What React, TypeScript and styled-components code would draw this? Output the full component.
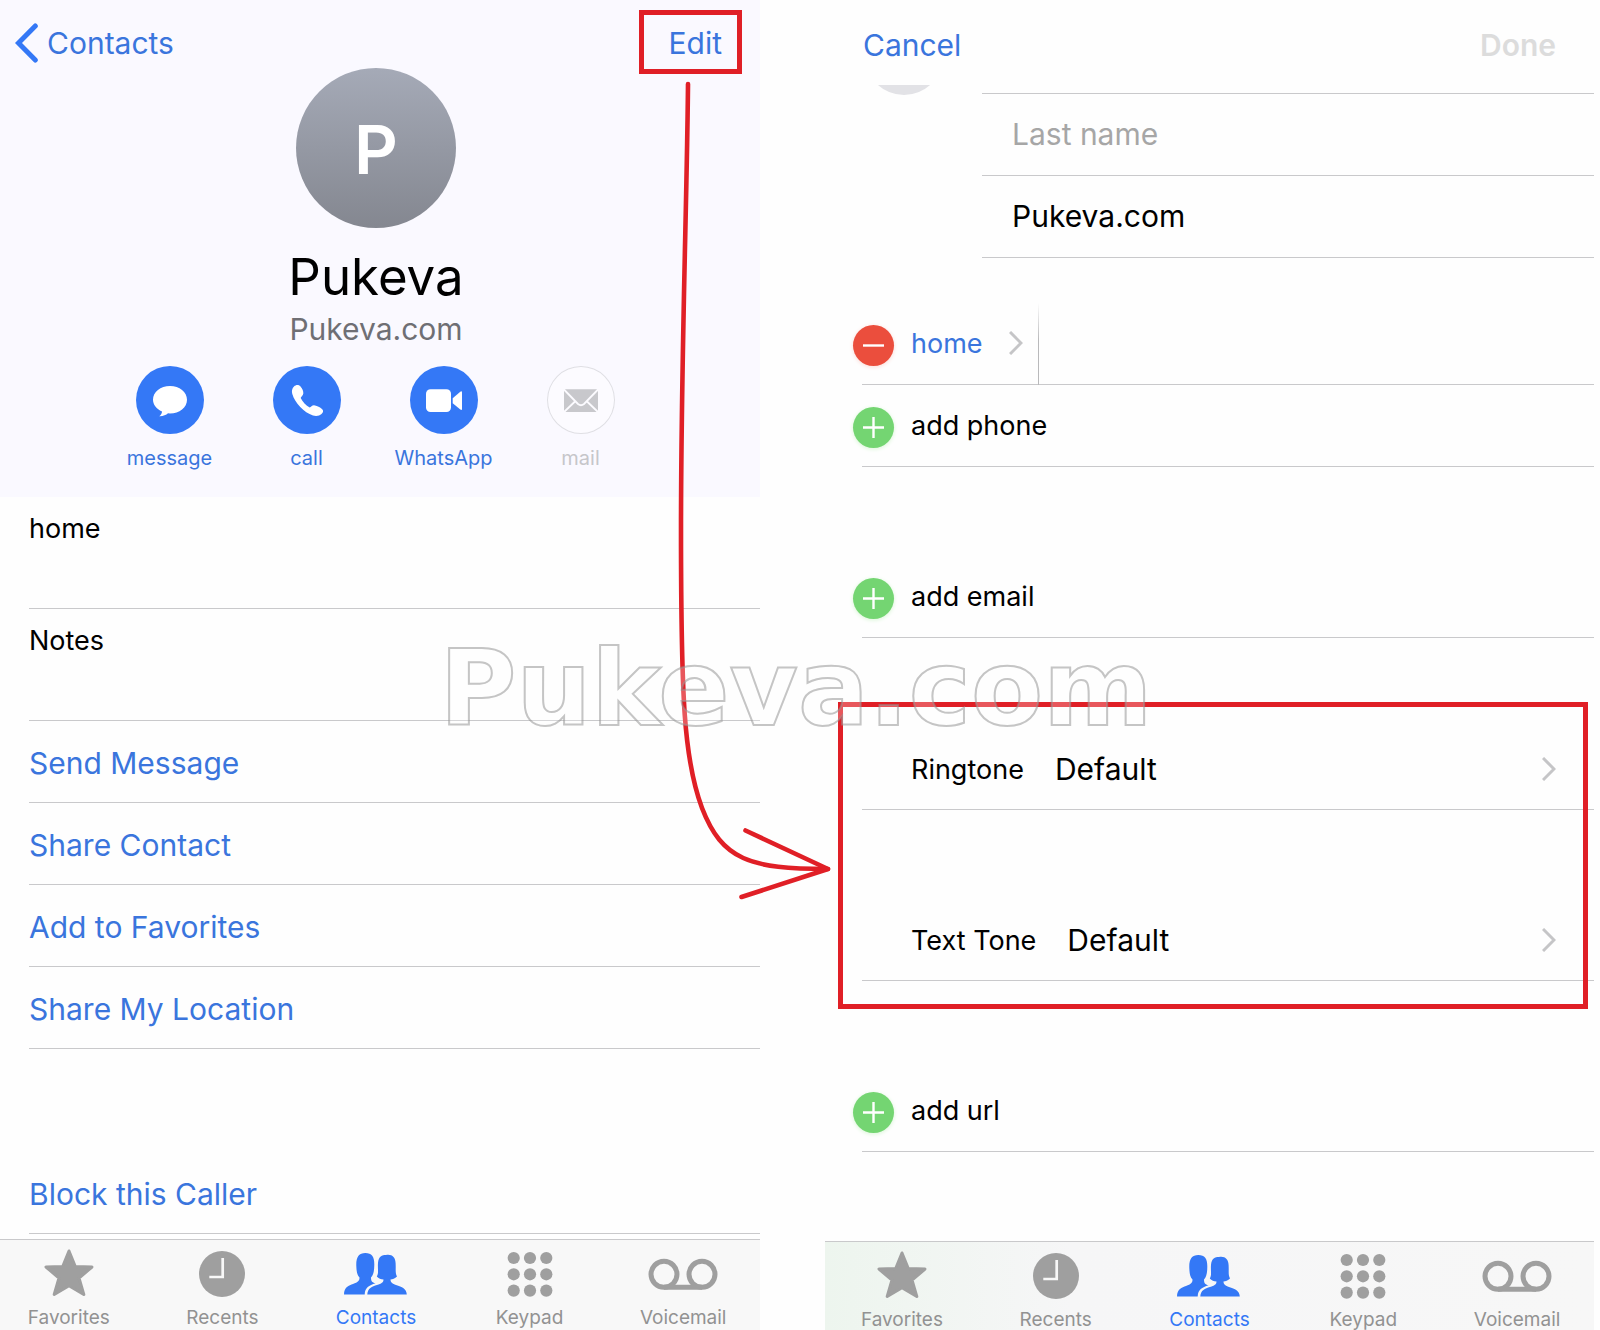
import React from "react";
import styled, { createGlobalStyle } from "styled-components";

const color = {
  blue: "#3478f6",
  link: "#3a75dd",
  line: "#c9c9cb",
  red: "#e01f26",
  grey: "#9f9f9f",
  tabText: "#929292",
};

const GlobalStyle = createGlobalStyle`
  *, *::before, *::after { box-sizing: border-box; }
  body {
    margin: 0;
    background: #fefefe;
    color: #000;
    font-family: Inter, "Liberation Sans", sans-serif;
  }
  button, input {
    margin: 0;
    padding: 0;
    border: 0;
    background: none;
    font: inherit;
    color: inherit;
    text-align: left;
  }
  svg { display: block; flex: none; }
`;

const Page = styled.div`
  position: relative;
  display: grid;
  grid-template-columns: 760fr 769fr;
  gap: 65px;
  padding-right: 6px;
  min-height: 100vh;
`;

const Panel = styled.section`
  display: flex;
  flex-direction: column;
  min-width: 0;
  overflow: hidden;
`;

/* ---------- contact card ---------- */

const Header = styled.header`
  background: #faf9ff;
  padding-bottom: 27px;
`;

const HeaderTop = styled.div`
  display: grid;
  grid-template-columns: 1fr auto 1fr;
  align-items: start;
  padding: 10px 18px 0 10px;
`;

const BackButton = styled.button`
  display: flex;
  align-items: center;
  gap: 9px;
  height: 64px;
  padding: 2px 0 0 5px;
  color: ${color.link};
  font-size: 30px;
`;

const EditButton = styled.button`
  justify-self: end;
  height: 64px;
  padding: 2px 15px 0 25px;
  border: 5px solid ${color.red};
  color: ${color.link};
  font-size: 30px;
`;

const Avatar = styled.div`
  display: grid;
  place-items: center;
  width: 160px;
  height: 160px;
  margin-top: 58px;
  padding-top: 2px;
  border-radius: 50%;
  background: linear-gradient(#a5aab7, #848790);
  color: #fff;
  font-size: 68px;
  font-weight: 600;
`;

const Identity = styled.div`
  padding: 19px 8px 0 0;
  text-align: center;
`;

const Name = styled.h1`
  margin: 0;
  font-size: 51px;
  font-weight: 400;
  line-height: 60px;
`;

const Company = styled.p`
  margin: 0;
  color: #6f6f74;
  font-size: 30px;
  line-height: 44px;
`;

const Actions = styled.div`
  display: grid;
  grid-template-columns: repeat(4, 137px);
  justify-content: center;
  padding: 15px 10px 0 0;
`;

const Action = styled.button`
  display: flex;
  flex-direction: column;
  align-items: center;
  gap: 12px;
  color: ${(p) => (p.disabled ? "#c6c6ca" : color.link)};
  font-size: 20px;
  line-height: 24px;
`;

const ActionDisc = styled.span<{ $off?: boolean }>`
  width: 68px;
  height: 68px;
  border-radius: 50%;
  background: ${(p) => (p.$off ? "#fcfbff" : color.blue)};
  box-shadow: ${(p) => (p.$off ? "inset 0 0 0 1px #dfdfe4" : "none")};
`;

const CardRows = styled.div`
  padding: 0 0 5px 29px;
`;

const InfoRow = styled.div`
  height: 112px;
  padding-top: 15px;
  border-bottom: 1px solid ${color.line};
  font-size: 27px;
  line-height: 34px;
`;

const LinkRow = styled.button<{ $apart?: boolean }>`
  display: block;
  width: 100%;
  height: 82px;
  margin-top: ${(p) => (p.$apart ? 103 : 0)}px;
  padding-top: 2px;
  border-bottom: 1px solid ${color.line};
  color: ${color.link};
  font-size: 30px;
`;

/* ---------- edit form ---------- */

const FormNav = styled.header`
  display: flex;
  justify-content: space-between;
  align-items: center;
  height: 85px;
  padding: 5px 38px 0 38px;
  font-size: 30px;
`;

const CancelButton = styled.button`
  color: ${color.link};
`;

const DoneButton = styled.button`
  color: #dcdcdc;
  font-weight: 600;
`;

const NameBlock = styled.div`
  display: grid;
  grid-template-columns: 157px 1fr;
`;

const PhotoPeek = styled.div`
  display: flex;
  align-items: flex-end;
  justify-content: center;
  height: 10px;
  overflow: hidden;
`;

const Photo = styled.div`
  flex: none;
  width: 78px;
  height: 78px;
  border-radius: 50%;
  background: #e2e2e6;
`;

const NameFields = styled.div`
  border-top: 1px solid ${color.line};
  margin-top: 8px;
`;

const NameInput = styled.input`
  display: block;
  width: 100%;
  height: 82px;
  padding: 0 0 2px 30px;
  border-bottom: 1px solid ${color.line};
  outline: 0;
  font-size: 30px;
  &::placeholder { color: #a6a6a6; opacity: 1; }
`;

const PhoneBlock = styled.div`
  padding-top: 45px;
`;

const FormRow = styled.div<{ $apart?: boolean; $indent?: boolean }>`
  display: flex;
  align-items: center;
  height: 82px;
  margin-top: ${(p) => (p.$apart ? 89 : 0)}px;
  padding: 0 38px 0 ${(p) => (p.$indent ? 86 : 28)}px;
  background: linear-gradient(${color.line}, ${color.line}) 37px 100% / 100% 1px no-repeat;
  font-size: 27px;
`;

const RowButton = styled.button`
  display: flex;
  align-items: center;
  gap: 17px;
`;

const RowLabel = styled.span`
  padding-bottom: 2px;
`;

const ToneButton = styled.button`
  display: flex;
  flex: 1;
  align-items: center;
  gap: 31px;
`;

const ToneValue = styled.span`
  flex: 1;
  font-size: 30px;
`;

const RoundSign = styled.span<{ $remove?: boolean }>`
  display: block;
  margin-top: 2px;
  border-radius: 50%;
  background: ${(p) => (p.$remove ? "#eb4e3d" : "#74d572")};
  box-shadow: 0 1px 4px ${(p) => (p.$remove ? "#fbdcd8" : "#d9f6d6")};
`;

const KindButton = styled.button`
  display: flex;
  align-items: center;
  gap: 26px;
  padding: 0 15px 2px 17px;
  color: ${color.link};
`;

const PhoneInput = styled.input`
  flex: 1;
  min-width: 0;
  align-self: stretch;
  padding-left: 16px;
  outline: 0;
  background: linear-gradient(transparent, #b9b9bb 45%) 0 0 / 1px 100% no-repeat;
`;

const ToneBlock = styled.div`
  position: relative;
  display: flow-root;
  padding-top: 1px;
`;

const Highlight = styled.div`
  position: absolute;
  inset: 64px 6px -28px 13px;
  border: 5px solid ${color.red};
  pointer-events: none;
`;

const FormFill = styled.div`
  height: 89px;
`;

/* ---------- tab bar ---------- */

const TabBar = styled.nav<{ $tinted?: boolean }>`
  display: grid;
  grid-template-columns: repeat(5, 1fr);
  flex: 1;
  margin-left: ${(p) => (p.$tinted ? 0 : -8)}px;
  padding-top: 9px;
  border-top: 1px solid ${color.line};
  background: ${(p) =>
    p.$tinted ? "linear-gradient(90deg, #edf5ee, #f6f6f7 32%, #f7f7f7)" : "#f8f8f8"};
`;

const Tab = styled.a<{ $active?: boolean }>`
  display: flex;
  flex-direction: column;
  align-items: center;
  gap: 11px;
  color: ${(p) => (p.$active ? color.blue : color.tabText)};
  font-size: 19px;
  line-height: 20px;
  text-decoration: none;
  svg { color: ${(p) => (p.$active ? color.blue : color.grey)}; }
`;

/* ---------- overlays ---------- */

const Arrow = styled.svg`
  position: absolute;
  top: 0;
  left: 0;
  width: 100%;
  height: 1330px;
  pointer-events: none;
`;

const Watermark = styled.div`
  position: absolute;
  top: 629px;
  left: 0;
  right: 8px;
  color: rgba(255, 255, 255, 0.25);
  font-family: "DejaVu Sans", sans-serif;
  font-size: 105px;
  font-weight: 700;
  line-height: 120px;
  text-align: center;
  -webkit-text-stroke: 2px rgba(150, 150, 150, 0.55);
  pointer-events: none;
`;

/* ---------- drawings ---------- */

const StarIcon = () => (
  <svg width="50" height="48" viewBox="0 0 50 48" fill="currentColor" stroke="currentColor" strokeWidth="3" strokeLinejoin="round">
    <path d="M25 2 31.3 17.5 48 18 35 29 39.8 45.5 25 36.8 10.2 45.5 15 29 2 18 18.7 17.5Z" />
  </svg>
);

const ClockIcon = () => (
  <svg width="48" height="48" viewBox="0 0 48 48">
    <circle cx="24" cy="25" r="23" fill="currentColor" />
    <path d="M11.3 28H24.7V9" fill="none" stroke="#f8f8f8" strokeWidth="2.7" />
  </svg>
);

const PeopleIcon = () => (
  <svg width="64" height="48" viewBox="0 0 64 48" fill="currentColor">
    <path d="M0 45.5C0 38 5 36.5 9 35 14 33 15.5 32 15.5 28.5 13 26 12.5 22 12.3 17 12 8 15 4 21.3 4 28 4 30.5 8 30.3 16 30.2 22 29.5 26 27 28.5 27 32 28 33.5 31.5 34.3 25 36.5 21 38.5 20.7 45.5Z" />
    <path d="M23.3 45.5C23.7 39 28 37.5 33 36 37.5 34.5 39.5 33.5 39.5 30.5 37 30.5 34.5 29.5 32.8 27.5 35 24 33.5 20 34 14 34.5 7.5 38 6 42 6 48 5 51.3 8 51.6 14 52 20 51 24 53 27.5 51 29.5 48.5 30.5 46.5 30.5 46.5 33.5 48.5 34.5 52 36 58 38 62.5 39.5 62.8 45.5Z" />
  </svg>
);

const KeypadIcon = () => (
  <svg width="46" height="48" viewBox="0 0 46 48" fill="currentColor">
    {[9, 25.3, 41.6].map((y) =>
      [6.7, 23, 39.3].map((x) => <circle key={`${x}-${y}`} cx={x} cy={y} r="6.1" />)
    )}
  </svg>
);

const VoicemailIcon = () => (
  <svg width="70" height="48" viewBox="0 0 70 48" fill="none" stroke="currentColor" strokeWidth="5">
    <circle cx="16" cy="25.3" r="13" />
    <circle cx="54" cy="25.3" r="13" />
    <path d="M16 38.3H54" />
  </svg>
);

const MessageIcon = () => (
  <svg viewBox="0 0 68 68" fill="#fff">
    <path d="M34 20C43.5 20 51 26 51 33.7S43.5 47.4 34 47.4L32 47.3C30 49 27 50.5 23.3 50.3 25 48.7 26 47 26 45.4 20.5 43 17 38.6 17 33.7 17 26 24.5 20 34 20Z" />
  </svg>
);

const PhoneIcon = () => (
  <svg viewBox="0 0 68 68" fill="#fff">
    <path d="M21 20.5C23 18.5 26 18.5 27.5 20.5 29.5 23 30.5 25 30.3 27.5 30.2 29.5 28 30.5 27.7 32 29.5 35.8 33 39.5 36.7 41.5 38 41 38.8 39.5 41 39.3 43.5 39.5 46.5 41 49 43 50.8 44.8 50.3 46.3 48.5 48 46.5 50 43 50.5 40 49.5 31 46.5 22 37 19.3 28 18.5 25 19 22.5 21 20.5Z" />
  </svg>
);

const VideoIcon = () => (
  <svg viewBox="0 0 68 68" fill="#fff">
    <rect x="16" y="23.3" width="25" height="22.7" rx="4.5" />
    <path d="M42.7 32.2 50.3 25.7Q52 24.6 52 26.4V43Q52 44.8 50.3 43.6L42.7 37.2Z" />
  </svg>
);

const MailIcon = () => (
  <svg viewBox="0 0 68 68">
    <path d="M17 23.3H51V46H17Z" fill="#c8c8cc" />
    <path d="M16 22.5 31 38Q34 40.4 37 38L52 22.5M16 47 28.5 35M52 47 39.5 35" fill="none" stroke="#fcfbff" strokeWidth="1.8" />
  </svg>
);

const BackIcon = () => (
  <svg width="23" height="40" viewBox="0 0 23 40" fill="none" stroke={color.blue} strokeWidth="5" strokeLinecap="round" strokeLinejoin="miter">
    <path d="M20.3 3 3.5 20 20.3 37" />
  </svg>
);

const ChevronIcon = () => (
  <svg width="14" height="24" viewBox="0 0 14 24" fill="none" stroke="#c5c5c7" strokeWidth="3">
    <path d="M1 1 12 12 1 23" />
  </svg>
);

const Sign = ({ remove }: { remove?: boolean }) => (
  <RoundSign $remove={remove}>
    <svg width="41" height="41" viewBox="0 0 41 41" stroke="#fff" strokeWidth="2.4">
      <path d={remove ? "M10 20.5H31" : "M10 20.5H31M20.5 10V31"} />
    </svg>
  </RoundSign>
);

/* ---------- composition ---------- */

const tabs = [
  { label: "Favorites", Icon: StarIcon },
  { label: "Recents", Icon: ClockIcon },
  { label: "Contacts", Icon: PeopleIcon },
  { label: "Keypad", Icon: KeypadIcon },
  { label: "Voicemail", Icon: VoicemailIcon },
];

const actions = [
  { label: "message", Icon: MessageIcon },
  { label: "call", Icon: PhoneIcon },
  { label: "WhatsApp", Icon: VideoIcon },
  { label: "mail", Icon: MailIcon, off: true },
];

const links = ["Send Message", "Share Contact", "Add to Favorites", "Share My Location"];

const Tabs = ({ tinted }: { tinted?: boolean }) => (
  <TabBar $tinted={tinted}>
    {tabs.map(({ label, Icon }) => (
      <Tab key={label} href="#" $active={label === "Contacts"}>
        <Icon />
        {label}
      </Tab>
    ))}
  </TabBar>
);

const AddRow = ({ label, apart }: { label: string; apart?: boolean }) => (
  <FormRow $apart={apart}>
    <RowButton>
      <Sign />
      <RowLabel>{label}</RowLabel>
    </RowButton>
  </FormRow>
);

const ToneRow = ({ label }: { label: string }) => (
  <FormRow $apart $indent>
    <ToneButton>
      {label}
      <ToneValue>Default</ToneValue>
      <ChevronIcon />
    </ToneButton>
  </FormRow>
);

const ContactCard = () => (
  <Panel>
    <Header>
      <HeaderTop>
        <BackButton>
          <BackIcon />
          Contacts
        </BackButton>
        <Avatar>P</Avatar>
        <EditButton>Edit</EditButton>
      </HeaderTop>
      <Identity>
        <Name>Pukeva</Name>
        <Company>Pukeva.com</Company>
      </Identity>
      <Actions>
        {actions.map(({ label, Icon, off }) => (
          <Action key={label} disabled={off}>
            <ActionDisc $off={off}>
              <Icon />
            </ActionDisc>
            {label}
          </Action>
        ))}
      </Actions>
    </Header>
    <CardRows>
      <InfoRow>home</InfoRow>
      <InfoRow>Notes</InfoRow>
      {links.map((label) => (
        <LinkRow key={label}>{label}</LinkRow>
      ))}
      <LinkRow $apart>Block this Caller</LinkRow>
    </CardRows>
    <Tabs />
  </Panel>
);

const EditForm = () => (
  <Panel>
    <FormNav>
      <CancelButton>Cancel</CancelButton>
      <DoneButton disabled>Done</DoneButton>
    </FormNav>
    <NameBlock>
      <PhotoPeek>
        <Photo />
      </PhotoPeek>
      <NameFields>
        <NameInput aria-label="Last name" placeholder="Last name" />
        <NameInput aria-label="Company" defaultValue="Pukeva.com" />
      </NameFields>
    </NameBlock>
    <PhoneBlock>
      <FormRow>
        <Sign remove />
        <KindButton>
          home
          <ChevronIcon />
        </KindButton>
        <PhoneInput type="tel" aria-label="home phone" />
      </FormRow>
      <AddRow label="add phone" />
    </PhoneBlock>
    <AddRow label="add email" apart />
    <ToneBlock>
      <ToneRow label="Ringtone" />
      <ToneRow label="Text Tone" />
      <Highlight />
    </ToneBlock>
    <AddRow label="add url" apart />
    <FormFill />
    <Tabs tinted />
  </Panel>
);

export default function App() {
  return (
    <>
      <GlobalStyle />
      <Page>
        <ContactCard />
        <EditForm />
        <Arrow viewBox="0 0 1600 1330" preserveAspectRatio="none" fill="none" stroke={color.red} strokeWidth="4.6" strokeLinecap="round" strokeLinejoin="round">
          <path d="M688 84C687 200 681 360 681 530 681 700 684 760 702 808 722 860 750 869 828 869" />
          <path d="M745.5 830.5 828 869 741.5 897" />
        </Arrow>
        <Watermark>Pukeva.com</Watermark>
      </Page>
    </>
  );
}
